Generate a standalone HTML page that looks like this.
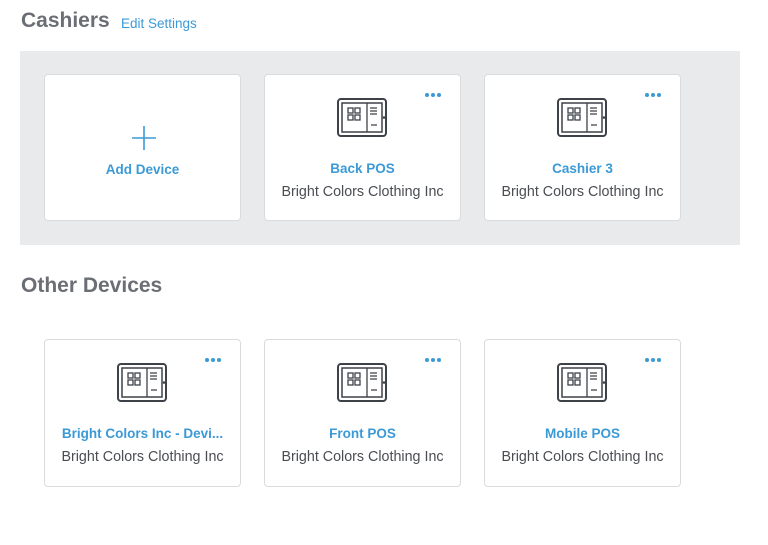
<!DOCTYPE html>
<html><head><style>
body{margin:0;width:768px;height:545px;background:#fff;font-family:"Liberation Sans",sans-serif;position:relative;overflow:hidden}
.h{position:absolute;left:21px;font-size:21px;font-weight:bold;color:#6b6f75}
.link{position:absolute;left:121px;top:16px;font-size:13.5px;color:#3b9ad6}
.band{position:absolute;left:20px;top:51px;width:720px;height:194px;background:#e9eaeb}
.card{position:absolute;width:197px;height:147px;background:#fff;border:1px solid #d9dbdd;border-radius:4px;box-sizing:border-box}
.t{position:absolute;left:0;right:0;top:86px;text-align:center;font-size:13.5px;font-weight:bold;color:#3b9ad6}
.s{position:absolute;left:0;right:0;top:109px;text-align:center;font-size:14.3px;color:#4a4d52}
.dots{position:absolute;right:17px;top:9px;font-size:14px;color:#3b9ad6;font-weight:bold;letter-spacing:-1px}
.dots i{display:inline-block;width:4px;height:4px;border-radius:50%;background:#3b9ad6;margin-right:2px}
svg.ic{position:absolute;left:72px;top:23px}
</style></head><body>
<div class="h" style="top:9px">Cashiers</div>
<div class="link">Edit Settings</div>
<div class="band"></div>
<div class="h" style="top:274px">Other Devices</div>

<div class="card" style="left:44px;top:74px">
<svg style="position:absolute;left:87px;top:51px" width="24" height="24"><path d="M12 0V24M0 12H24" stroke="#3b9ad6" stroke-width="1.6"/></svg>
<div class="t" style="top:87px">Add Device</div></div>

<div class="card" style="left:264px;top:74px"><div class="dots"><i></i><i></i><i></i></div>
<svg class="ic" width="52" height="40" viewBox="0 0 52 40"><rect x="1" y="1" width="48" height="37" rx="3" fill="none" stroke="#3d4248" stroke-width="2"/><rect x="5" y="5" width="40" height="29" fill="none" stroke="#3d4248" stroke-width="1.5"/><rect x="11" y="10" width="5" height="5" fill="none" stroke="#3d4248" stroke-width="1.3"/><rect x="18" y="10" width="5" height="5" fill="none" stroke="#3d4248" stroke-width="1.3"/><rect x="11" y="17" width="5" height="5" fill="none" stroke="#3d4248" stroke-width="1.3"/><rect x="18" y="17" width="5" height="5" fill="none" stroke="#3d4248" stroke-width="1.3"/><path d="M30 5V34M33 10H40M33 13H40M33 16H40M34 27H40" stroke="#3d4248" stroke-width="1.3"/><circle cx="47" cy="19.5" r="1.3" fill="#3d4248"/></svg>
<div class="t">Back POS</div><div class="s">Bright Colors Clothing Inc</div></div>

<div class="card" style="left:484px;top:74px"><div class="dots"><i></i><i></i><i></i></div>
<svg class="ic" width="52" height="40" viewBox="0 0 52 40"><rect x="1" y="1" width="48" height="37" rx="3" fill="none" stroke="#3d4248" stroke-width="2"/><rect x="5" y="5" width="40" height="29" fill="none" stroke="#3d4248" stroke-width="1.5"/><rect x="11" y="10" width="5" height="5" fill="none" stroke="#3d4248" stroke-width="1.3"/><rect x="18" y="10" width="5" height="5" fill="none" stroke="#3d4248" stroke-width="1.3"/><rect x="11" y="17" width="5" height="5" fill="none" stroke="#3d4248" stroke-width="1.3"/><rect x="18" y="17" width="5" height="5" fill="none" stroke="#3d4248" stroke-width="1.3"/><path d="M30 5V34M33 10H40M33 13H40M33 16H40M34 27H40" stroke="#3d4248" stroke-width="1.3"/><circle cx="47" cy="19.5" r="1.3" fill="#3d4248"/></svg>
<div class="t">Cashier 3</div><div class="s">Bright Colors Clothing Inc</div></div>

<div class="card" style="left:44px;top:339px;height:148px"><div class="dots"><i></i><i></i><i></i></div>
<svg class="ic" width="52" height="40" viewBox="0 0 52 40"><rect x="1" y="1" width="48" height="37" rx="3" fill="none" stroke="#3d4248" stroke-width="2"/><rect x="5" y="5" width="40" height="29" fill="none" stroke="#3d4248" stroke-width="1.5"/><rect x="11" y="10" width="5" height="5" fill="none" stroke="#3d4248" stroke-width="1.3"/><rect x="18" y="10" width="5" height="5" fill="none" stroke="#3d4248" stroke-width="1.3"/><rect x="11" y="17" width="5" height="5" fill="none" stroke="#3d4248" stroke-width="1.3"/><rect x="18" y="17" width="5" height="5" fill="none" stroke="#3d4248" stroke-width="1.3"/><path d="M30 5V34M33 10H40M33 13H40M33 16H40M34 27H40" stroke="#3d4248" stroke-width="1.3"/><circle cx="47" cy="19.5" r="1.3" fill="#3d4248"/></svg>
<div class="t">Bright Colors Inc - Devi...</div><div class="s">Bright Colors Clothing Inc</div></div>

<div class="card" style="left:264px;top:339px;height:148px"><div class="dots"><i></i><i></i><i></i></div>
<svg class="ic" width="52" height="40" viewBox="0 0 52 40"><rect x="1" y="1" width="48" height="37" rx="3" fill="none" stroke="#3d4248" stroke-width="2"/><rect x="5" y="5" width="40" height="29" fill="none" stroke="#3d4248" stroke-width="1.5"/><rect x="11" y="10" width="5" height="5" fill="none" stroke="#3d4248" stroke-width="1.3"/><rect x="18" y="10" width="5" height="5" fill="none" stroke="#3d4248" stroke-width="1.3"/><rect x="11" y="17" width="5" height="5" fill="none" stroke="#3d4248" stroke-width="1.3"/><rect x="18" y="17" width="5" height="5" fill="none" stroke="#3d4248" stroke-width="1.3"/><path d="M30 5V34M33 10H40M33 13H40M33 16H40M34 27H40" stroke="#3d4248" stroke-width="1.3"/><circle cx="47" cy="19.5" r="1.3" fill="#3d4248"/></svg>
<div class="t">Front POS</div><div class="s">Bright Colors Clothing Inc</div></div>

<div class="card" style="left:484px;top:339px;height:148px"><div class="dots"><i></i><i></i><i></i></div>
<svg class="ic" width="52" height="40" viewBox="0 0 52 40"><rect x="1" y="1" width="48" height="37" rx="3" fill="none" stroke="#3d4248" stroke-width="2"/><rect x="5" y="5" width="40" height="29" fill="none" stroke="#3d4248" stroke-width="1.5"/><rect x="11" y="10" width="5" height="5" fill="none" stroke="#3d4248" stroke-width="1.3"/><rect x="18" y="10" width="5" height="5" fill="none" stroke="#3d4248" stroke-width="1.3"/><rect x="11" y="17" width="5" height="5" fill="none" stroke="#3d4248" stroke-width="1.3"/><rect x="18" y="17" width="5" height="5" fill="none" stroke="#3d4248" stroke-width="1.3"/><path d="M30 5V34M33 10H40M33 13H40M33 16H40M34 27H40" stroke="#3d4248" stroke-width="1.3"/><circle cx="47" cy="19.5" r="1.3" fill="#3d4248"/></svg>
<div class="t">Mobile POS</div><div class="s">Bright Colors Clothing Inc</div></div>
</body></html>
